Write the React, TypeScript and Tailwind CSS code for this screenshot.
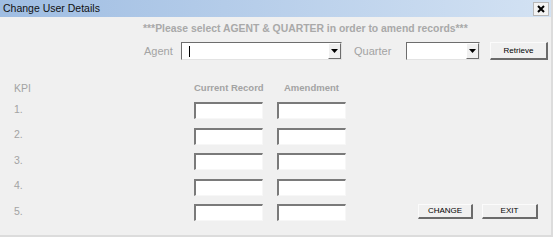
import React from "react";

const font = { fontFamily: "'Liberation Sans', Arial, sans-serif" };

function Combo({ width, caret }: { width: string; caret?: boolean }) {
    return (
        <div className={`${width} h-[18px] flex bg-white border-t border-l border-t-[#6d6d6d] border-l-[#6d6d6d] border-b border-r border-b-[#e3e3e3] border-r-[#e3e3e3]`}>
            <div className="flex-1 flex items-center pl-[7px]">
                {caret && <span className="w-px h-[11px] bg-black" />}
            </div>
            <div className="w-[13px] h-full flex items-center justify-center bg-[#f0f0f0] border-r border-b border-[#6d6d6d] border-t border-l border-t-white border-l-white">
                <svg width="7" height="4" viewBox="0 0 7 4">
                    <path d="M0 0 H7 L3.5 4 Z" fill="#000" />
                </svg>
            </div>
        </div>
    );
}

function Field() {
    return (
        <div className="w-[69px] h-[17px] bg-white border-t-2 border-l-2 border-t-[#7a7a7a] border-l-[#7a7a7a] border-b border-r border-b-[#f7f7f7] border-r-[#f7f7f7]" />
    );
}

function Btn({ label, w }: { label: string; w: string }) {
    return (
        <button
            type="button"
            className={`${w} flex items-center justify-center bg-[#f0f0f0] border-t border-l border-t-[#fbfbfb] border-l-[#fbfbfb] border-b-2 border-r-2 border-b-[#6b6b6b] border-r-[#6b6b6b] text-[8px] text-black leading-none whitespace-nowrap`}
        >
            {label}
        </button>
    );
}

export default function App() {
    const rows = ["1.", "2.", "3.", "4.", "5."];

    return (
        <div className="w-[553px] h-[237px] bg-[#f0f0f0] flex flex-col overflow-hidden border-r-2 border-b-2 border-[#dcdcdc]" style={font}>

            <div className="h-[17px] shrink-0 flex items-center justify-between pl-[3px] pr-[2px] bg-gradient-to-r from-[#9fbde2] to-[#d3e2f3]">
                <span className="text-[10.5px] text-[#111] leading-none whitespace-nowrap">Change User Details</span>
                <div className="w-[16px] h-[14px] bg-[#f3f3f3] border border-[#b8b8b8] flex items-center justify-center">
                    <svg width="8" height="8" viewBox="0 0 8 8">
                        <path d="M1 1 L7 7 M7 1 L1 7" stroke="#000" strokeWidth="2" />
                    </svg>
                </div>
            </div>

            <div className="pl-[143px] pt-[5px] text-[10.4px] font-bold text-[#a9a9a9] leading-[14px] whitespace-nowrap">
                ***Please select AGENT &amp; QUARTER in order to amend records***
            </div>

            <div className="flex items-center mt-[6px] pl-[144px] text-[11px] text-[#a3a3a3] whitespace-nowrap">
                <span className="w-[37px]">Agent</span>
                <Combo width="w-[161px]" caret />
                <span className="ml-[12px] w-[52px]">Quarter</span>
                <Combo width="w-[74px]" />
                <div className="ml-[10px]">
                    <Btn label="Retrieve" w="w-[58px] h-[18px]" />
                </div>
            </div>

            <div className="mt-[21px] pl-[14px] grid grid-cols-[180px_83px_69px] text-[9.5px] text-[#a3a3a3] leading-[14px] whitespace-nowrap">
                <span className="text-[10.5px]">KPI</span>
                <span className="font-bold">Current Record</span>
                <span className="font-bold pl-[7px]">Amendment</span>
            </div>

            <div className="mt-[7px] pl-[14px] flex flex-col gap-[8.5px]">
                {rows.map((r, i) => (
                    <div key={r} className="flex items-center h-[17px]">
                        <span className="w-[180px] text-[10.5px] text-[#a3a3a3] leading-none -mt-[3px]">{r}</span>
                        <Field />
                        <div className="ml-[14px]"><Field /></div>
                        {i === 4 && (
                            <div className="ml-[72px] flex gap-[9px] self-start">
                                <Btn label="CHANGE" w="w-[55px] h-[15px]" />
                                <Btn label="EXIT" w="w-[56px] h-[15px]" />
                            </div>
                        )}
                    </div>
                ))}
            </div>

        </div>
    );
}
